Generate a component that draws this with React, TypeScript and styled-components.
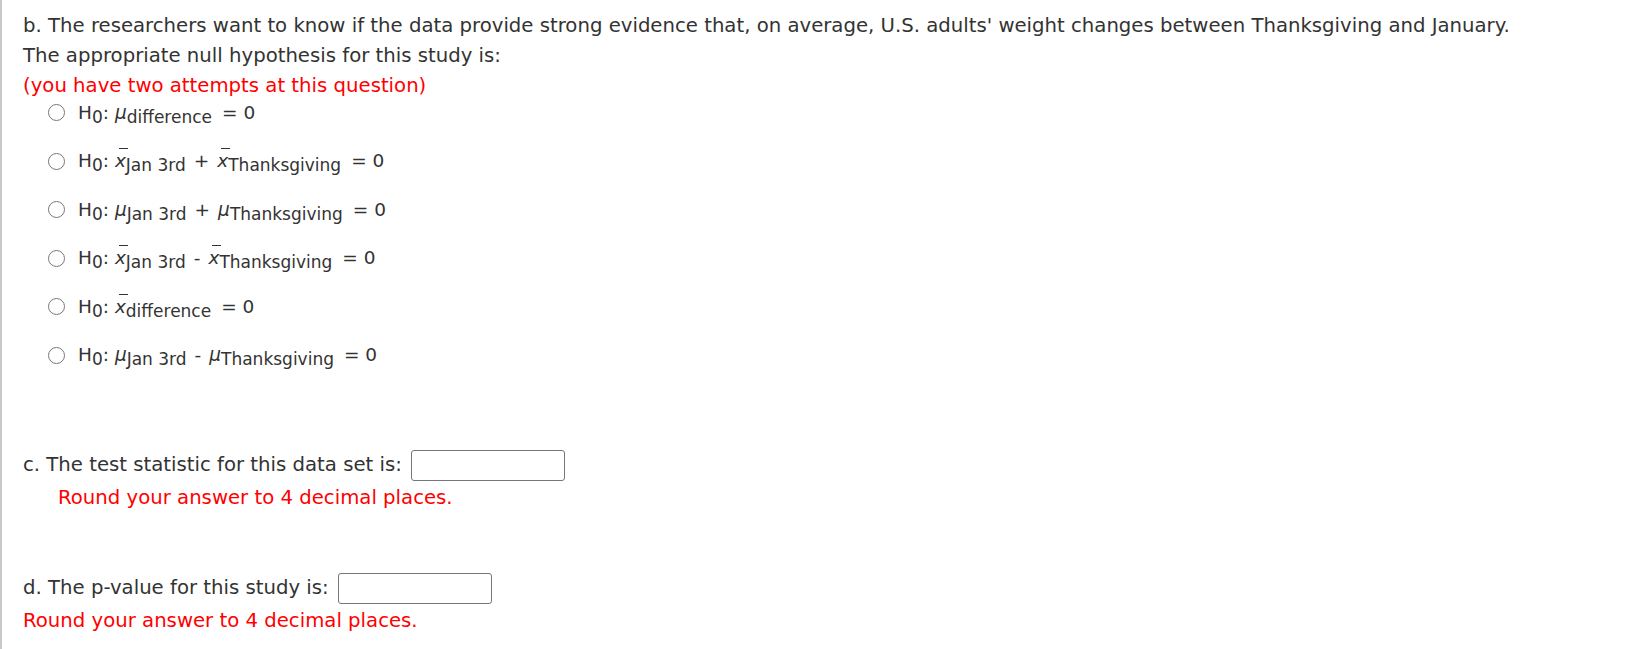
import React from "react";
import styled, { createGlobalStyle } from "styled-components";

const GlobalStyle = createGlobalStyle`
  html, body {
    margin: 0;
    padding: 0;
    background: #ffffff;
  }
  body {
    font-family: "DejaVu Sans", Verdana, sans-serif;
    color: #333333;
  }
`;

const Page = styled.div`
  box-sizing: border-box;
  min-height: 100vh;
  border-left: 2px solid #c8c8c8;
  padding: 10.5px 0 0 21px;
  font-size: 19.7px;
  line-height: 30px;
`;

const Line = styled.div`
  margin: 0;
  white-space: nowrap;
`;

const Notice = styled.div<{ $indent?: number; $top?: number }>`
  color: #ff0000;
  padding-left: ${(p) => p.$indent ?? 0}px;
  margin-top: ${(p) => p.$top ?? 0}px;
`;

const OptionList = styled.div`
  display: flex;
  flex-direction: column;
  gap: 24.6px;
  margin-top: 0;
  padding-left: 25px;
`;

const OptionRow = styled.label`
  display: flex;
  align-items: center;
  gap: 13px;
  font-size: 18.5px;
  line-height: 24px;
  white-space: nowrap;
`;

const Radio = styled.input`
  appearance: none;
  -webkit-appearance: none;
  box-sizing: border-box;
  width: 17px;
  height: 17px;
  margin: 0;
  border: 1.5px solid #777777;
  border-radius: 50%;
  background: #ffffff;
  flex: none;
`;

const Expr = styled.span`
  display: inline-block;
`;

const Sub = styled.sub`
  font-size: 17px;
  vertical-align: -4px;
  line-height: 0;
`;

const Var = styled.span`
  font-style: italic;
`;

const BarVar = styled.span`
  position: relative;
  font-style: italic;
  &::after {
    content: "";
    position: absolute;
    left: 4px;
    top: -2px;
    width: 9px;
    height: 1px;
    background: #333333;
  }
`;

const Op = styled.span`
  margin: 0 8px;
`;

const Eq = styled.span`
  margin-left: 10px;
`;

const AnswerRow = styled.div<{ $top: number }>`
  display: flex;
  align-items: center;
  gap: 9px;
  margin-top: ${(p) => p.$top}px;
`;

const AnswerBox = styled.input`
  box-sizing: border-box;
  width: 154px;
  height: 31px;
  margin: 0;
  border: 1px solid #767676;
  border-radius: 3px;
  background: #ffffff;
  font: inherit;
  padding: 0 6px;
`;

type Term = { sym: "mu" | "xbar"; sub: string };

const Symbol: React.FC<Term> = ({ sym, sub }) => (
  <>
    {sym === "mu" ? <Var>μ</Var> : <BarVar>x</BarVar>}
    <Sub>{sub}</Sub>
  </>
);

type Option = { terms: Term[]; op?: string };

const options: Option[] = [
  { terms: [{ sym: "mu", sub: "difference" }] },
  {
    terms: [
      { sym: "xbar", sub: "Jan 3rd" },
      { sym: "xbar", sub: "Thanksgiving" },
    ],
    op: "+",
  },
  {
    terms: [
      { sym: "mu", sub: "Jan 3rd" },
      { sym: "mu", sub: "Thanksgiving" },
    ],
    op: "+",
  },
  {
    terms: [
      { sym: "xbar", sub: "Jan 3rd" },
      { sym: "xbar", sub: "Thanksgiving" },
    ],
    op: "-",
  },
  { terms: [{ sym: "xbar", sub: "difference" }] },
  {
    terms: [
      { sym: "mu", sub: "Jan 3rd" },
      { sym: "mu", sub: "Thanksgiving" },
    ],
    op: "-",
  },
];

export default function App() {
  return (
    <>
      <GlobalStyle />
      <Page>
        <Line>
          b. The researchers want to know if the data provide strong evidence that, on average, U.S. adults' weight
          changes between Thanksgiving and January.
        </Line>
        <Line>The appropriate null hypothesis for this study is:</Line>
        <Notice>(you have two attempts at this question)</Notice>
        <OptionList>
          {options.map((o, i) => (
            <OptionRow key={i}>
              <Radio type="radio" name="h0" />
              <Expr>
                H<Sub>0</Sub>: <Symbol {...o.terms[0]} />
                {o.terms[1] && (
                  <>
                    <Op>{o.op}</Op>
                    <Symbol {...o.terms[1]} />
                  </>
                )}
                <Eq>= 0</Eq>
              </Expr>
            </OptionRow>
          ))}
        </OptionList>
        <AnswerRow $top={82.5}>
          <span>c. The test statistic for this data set is:</span>
          <AnswerBox type="text" />
        </AnswerRow>
        <Notice $indent={35} $top={2}>
          Round your answer to 4 decimal places.
        </Notice>
        <AnswerRow $top={60}>
          <span>d. The p-value for this study is:</span>
          <AnswerBox type="text" />
        </AnswerRow>
        <Notice $top={2}>Round your answer to 4 decimal places.</Notice>
      </Page>
    </>
  );
}
